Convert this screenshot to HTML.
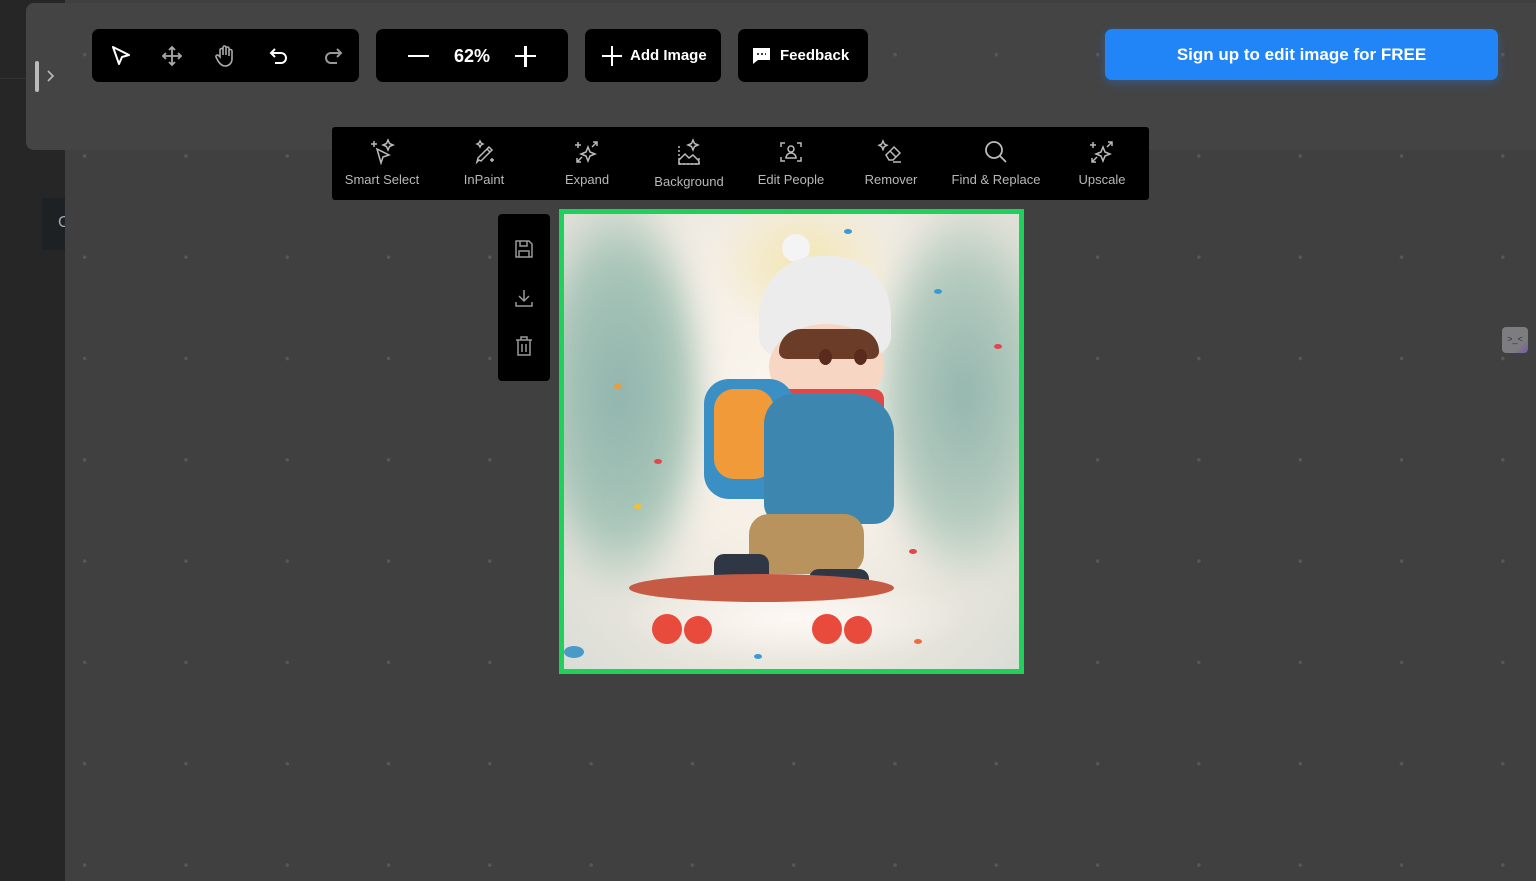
<!DOCTYPE html>
<html><head><meta charset="utf-8"><style>
*{margin:0;padding:0;box-sizing:border-box}
body{width:1536px;height:881px;overflow:hidden;background:#3f3f3f;font-family:"Liberation Sans",sans-serif;position:relative}
.leftbar{position:absolute;left:0;top:0;width:65px;height:881px;background:#262626}
.canvas{position:absolute;left:65px;top:0;right:0;bottom:0;background:#404040;
background-image:radial-gradient(circle,#575757 1.6px,transparent 2px);background-size:101.3px 101.3px;background-position:-31px 4px}
.toppanel{position:absolute;left:26px;top:3px;width:1510px;height:147px;background:#444;border-radius:8px 0 0 8px;
background-image:radial-gradient(circle,#585858 1.6px,transparent 2px);background-size:101.3px 101.3px;background-position:8px 1px}
.bar{position:absolute;background:#000;border-radius:7px;display:flex;align-items:center;color:#fff}
svg{display:block}
.tb{position:absolute;left:332px;top:127px;width:817px;height:73px;background:#000;border-radius:3px}
.tool{position:absolute;top:0;height:73px;text-align:center;color:#b8b8b8;font-size:13px}
.tool svg{margin:11px auto 0}
.tool span{display:block;margin-top:6px;white-space:nowrap}
.side{position:absolute;left:498px;top:214px;width:52px;height:167px;background:#000;border-radius:4px}
.img{position:absolute;left:559px;top:209px;width:465px;height:465px;border:5px solid #1fd05a;overflow:hidden;
background:radial-gradient(ellipse at 50% 40%,#fbf6ee 0%,#f5efe6 40%,#e9e6dd 70%,#d9dcd6 100%)}
.img div{position:absolute}
.c{width:8px;height:5px;border-radius:50%}
</style></head><body>
<div class="leftbar"></div>
<div style="position:absolute;left:0;top:78px;width:26px;height:1px;background:#333"></div>
<div style="position:absolute;left:42px;top:198px;width:23px;height:52px;background:#1e2124"></div>
<div style="position:absolute;left:58px;top:214px;color:#9ab;font-size:16px">C</div>
<div class="canvas"></div>
<div class="toppanel"></div>
<div style="position:absolute;left:35px;top:61px;width:4px;height:31px;background:#bbb;border-radius:2px"></div>
<svg style="position:absolute;left:46px;top:69px" width="10" height="14"><path d="M2 2l5 5-5 5" stroke="#bbb" stroke-width="1.6" fill="none"/></svg>

<div class="bar" style="left:92px;top:29px;width:267px;height:53px"></div>
<svg style="position:absolute;left:110px;top:45px" width="22" height="22" viewBox="0 0 22 22"><path d="M3 2l16 8-7 2-3 7z" stroke="#fff" stroke-width="2" fill="none" stroke-linejoin="round"/></svg>
<svg style="position:absolute;left:161px;top:45px" width="22" height="22" viewBox="0 0 22 22" stroke="#aaa" stroke-width="1.8" fill="none"><path d="M11 2v18M2 11h18M8 5l3-3 3 3M8 17l3 3 3-3M5 8l-3 3 3 3M17 8l3 3-3 3"/></svg>
<svg style="position:absolute;left:214px;top:44px" width="22" height="24" viewBox="0 0 22 24" stroke="#aaa" stroke-width="1.6" fill="none"><path d="M6 13V6a1.5 1.5 0 013 0v5V3.5a1.5 1.5 0 013 0V11V4.5a1.5 1.5 0 013 0V12V7a1.5 1.5 0 013 0v8c0 4-3 7-7 7-3 0-5-2-7-5l-2-4a1.5 1.5 0 012.5-1.5z"/></svg>
<svg style="position:absolute;left:268px;top:45px" width="22" height="22" viewBox="0 0 22 22" stroke="#fff" stroke-width="2" fill="none"><path d="M7 4L3 8l4 4M3 8h10a5 5 0 010 10H7"/></svg>
<svg style="position:absolute;left:322px;top:45px" width="22" height="22" viewBox="0 0 22 22" stroke="#999" stroke-width="2" fill="none"><path d="M15 4l4 4-4 4M19 8H9a5 5 0 000 10h6"/></svg>

<div class="bar" style="left:376px;top:29px;width:192px;height:53px">
<div style="position:absolute;left:32px;top:26px;width:21px;height:2.4px;background:#fff"></div>
<div style="position:absolute;left:78px;top:17px;font-size:18px;font-weight:bold">62%</div>
<div style="position:absolute;left:139px;top:26px;width:21px;height:2.4px;background:#fff"></div>
<div style="position:absolute;left:148.3px;top:16.5px;width:2.4px;height:21px;background:#fff"></div>
</div>

<div class="bar" style="left:585px;top:29px;width:136px;height:53px">
<div style="position:absolute;left:17px;top:26px;width:20px;height:2.4px;background:#fff"></div>
<div style="position:absolute;left:25.8px;top:17px;width:2.4px;height:20px;background:#fff"></div>
<div style="position:absolute;left:45px;top:18px;font-size:15px;font-weight:bold">Add Image</div>
</div>

<div class="bar" style="left:738px;top:29px;width:130px;height:53px">
<svg style="position:absolute;left:14px;top:18px" width="19" height="18" viewBox="0 0 19 18"><path d="M1 1h17v12H6l-5 4z" fill="#fff"/><path d="M5 7h9" stroke="#000" stroke-width="1.5" stroke-dasharray="2 2"/></svg>
<div style="position:absolute;left:42px;top:18px;font-size:15px;font-weight:bold">Feedback</div>
</div>

<div style="position:absolute;left:1105px;top:29px;width:393px;height:51px;background:#2184f7;border-radius:7px;color:#fff;font-size:17px;font-weight:bold;text-align:center;line-height:51px;box-shadow:0 3px 10px rgba(33,132,247,.35)">Sign up to edit image for FREE</div>

<div class="tb">
<div class="tool" style="left:2px;width:96px"><svg width="28" height="28" viewBox="0 0 28 28" stroke="#bbb" stroke-width="1.5" fill="none"><path d="M9 11l4 14 2-6 6-2z"/><path d="M6 3v6M3 6h6M20 2l1.5 3.5L25 7l-3.5 1.5L20 12l-1.5-3.5L15 7l3.5-1.5z"/></svg><span>Smart Select</span></div>
<div class="tool" style="left:104px;width:96px"><svg width="28" height="28" viewBox="0 0 28 28" stroke="#bbb" stroke-width="1.5" fill="none"><path d="M9 22l-2 2 1-4 11-11 3 3-11 11zM17 11l3 3"/><path d="M10 3l1 2 2 1-2 1-1 2-1-2-2-1 2-1zM22 20v4M20 22h4"/></svg><span>InPaint</span></div>
<div class="tool" style="left:207px;width:96px"><svg width="28" height="28" viewBox="0 0 28 28" stroke="#bbb" stroke-width="1.5" fill="none"><path d="M15 9l2 5 5 2-5 2-2 5-2-5-5-2 5-2zM5 4v6M2 7h6M19 9l5-5M20 4h4v4M9 19l-5 5M4 20v4h4"/></svg><span>Expand</span></div>
<div class="tool" style="left:309px;width:96px"><svg width="28" height="30" viewBox="0 0 28 30" stroke="#bbb" stroke-width="1.5" fill="none"><path d="M4 8v12M4 26h20M24 20v6M4 20v6" stroke-dasharray="2 2"/><path d="M4 22l6-6 4 4 4-3 6 6v3H4z"/><path d="M18 2l1.5 3.5L23 7l-3.5 1.5L18 12l-1.5-3.5L13 7l3.5-1.5z"/></svg><span>Background</span></div>
<div class="tool" style="left:411px;width:96px"><svg width="28" height="28" viewBox="0 0 28 28" stroke="#bbb" stroke-width="1.5" fill="none"><path d="M4 9V5h4M20 5h4v4M24 19v4h-4M8 23H4v-4"/><circle cx="14" cy="11" r="3"/><path d="M9 20a5 5 0 0110 0z"/></svg><span>Edit People</span></div>
<div class="tool" style="left:511px;width:96px"><svg width="28" height="28" viewBox="0 0 28 28" stroke="#bbb" stroke-width="1.5" fill="none"><path d="M9 17l8-8 6 6-7 7h-4zM13 13l6 6M16 24h8"/><path d="M6 3l1.3 3L10 7.3 7.3 8.6 6 11.6 4.7 8.6 2 7.3 4.7 6z"/></svg><span>Remover</span></div>
<div class="tool" style="left:614px;width:100px"><svg width="28" height="28" viewBox="0 0 28 28" stroke="#bbb" stroke-width="1.8" fill="none"><circle cx="12" cy="12" r="8"/><path d="M18 18l6 6"/></svg><span>Find &amp; Replace</span></div>
<div class="tool" style="left:722px;width:96px"><svg width="28" height="28" viewBox="0 0 28 28" stroke="#bbb" stroke-width="1.5" fill="none"><path d="M15 9l2 5 5 2-5 2-2 5-2-5-5-2 5-2zM5 4v6M2 7h6M19 9l5-5M20 4h4v4M9 19l-5 5M4 20v4h4"/></svg><span>Upscale</span></div>
</div>

<div class="side">
<svg style="position:absolute;left:15px;top:24px" width="22" height="22" viewBox="0 0 22 22" stroke="#999" stroke-width="1.5" fill="none"><path d="M3 3h13l3 3v13H3zM7 3v5h7V3M6 19v-6h10v6"/></svg>
<svg style="position:absolute;left:15px;top:73px" width="22" height="22" viewBox="0 0 22 22" stroke="#999" stroke-width="1.5" fill="none"><path d="M11 3v11M6 9l5 5 5-5M3 15v4h16v-4"/></svg>
<svg style="position:absolute;left:15px;top:121px" width="22" height="22" viewBox="0 0 22 22" stroke="#999" stroke-width="1.5" fill="none"><path d="M3 5h16M8 5V2h6v3M5 5v15h12V5M9 9v8M13 9v8"/></svg>
</div>

<div class="img">
<div style="left:-40px;top:-30px;width:190px;height:420px;background:radial-gradient(ellipse,#8fb4ad 0%,#a9c5b8 45%,transparent 70%);filter:blur(12px)"></div>
<div style="left:300px;top:-20px;width:200px;height:400px;background:radial-gradient(ellipse,#93b6ae 0%,#b6cbbf 45%,transparent 70%);filter:blur(12px)"></div>
<div style="left:150px;top:-20px;width:180px;height:140px;background:radial-gradient(ellipse,#f2e5b0 0%,transparent 70%);filter:blur(8px)"></div>
<div style="left:60px;top:360px;width:340px;height:90px;background:radial-gradient(ellipse,#fdf8f4,transparent 70%)"></div>
<div style="left:218px;top:20px;width:28px;height:28px;border-radius:50%;background:#f4f4f4"></div>
<div style="left:195px;top:42px;width:132px;height:100px;border-radius:60px 60px 20px 20px;background:#ececec"></div>
<div style="left:205px;top:110px;width:115px;height:85px;border-radius:50%;background:#f7d6c4"></div>
<div style="left:215px;top:115px;width:100px;height:30px;border-radius:30px 30px 10px 10px;background:#6b3d28"></div>
<div style="left:255px;top:135px;width:13px;height:16px;border-radius:50%;background:#5a2a1c"></div>
<div style="left:290px;top:135px;width:13px;height:16px;border-radius:50%;background:#5a2a1c"></div>
<div style="left:215px;top:175px;width:105px;height:30px;background:#e2474a;border-radius:10px"></div>
<div style="left:140px;top:165px;width:90px;height:120px;border-radius:25px;background:#3a8fc4"></div>
<div style="left:150px;top:175px;width:60px;height:90px;border-radius:20px;background:#f19a3a"></div>
<div style="left:200px;top:180px;width:130px;height:130px;border-radius:30px 40px 20px 20px;background:#3c86b0"></div>
<div style="left:185px;top:300px;width:115px;height:60px;border-radius:20px;background:#b9935e"></div>
<div style="left:150px;top:340px;width:55px;height:30px;border-radius:10px;background:#2f3644"></div>
<div style="left:245px;top:355px;width:60px;height:25px;border-radius:10px;background:#2f3644"></div>
<div style="left:65px;top:360px;width:265px;height:28px;border-radius:50%;background:#c65b45"></div>
<div style="left:88px;top:400px;width:30px;height:30px;border-radius:50%;background:#e84b3c"></div>
<div style="left:120px;top:402px;width:28px;height:28px;border-radius:50%;background:#e84b3c"></div>
<div style="left:248px;top:400px;width:30px;height:30px;border-radius:50%;background:#e84b3c"></div>
<div style="left:280px;top:402px;width:28px;height:28px;border-radius:50%;background:#e84b3c"></div>
<div class="c" style="left:280px;top:15px;background:#3a9ad8"></div>
<div class="c" style="left:370px;top:75px;background:#3a9ad8"></div>
<div class="c" style="left:50px;top:170px;background:#f19a3a"></div>
<div class="c" style="left:90px;top:245px;background:#e2474a"></div>
<div class="c" style="left:430px;top:130px;background:#e2474a"></div>
<div class="c" style="left:345px;top:335px;background:#e2474a"></div>
<div class="c" style="left:70px;top:290px;background:#f2c030"></div>
<div class="c" style="left:190px;top:440px;background:#3a9ad8"></div>
<div class="c" style="left:350px;top:425px;background:#e87040"></div>
<div style="left:0;top:432px;width:20px;height:12px;border-radius:50%;background:#4a9ac8"></div>
</div>

<div style="position:absolute;left:1502px;top:327px;width:26px;height:26px;border-radius:4px;background:linear-gradient(135deg,#7d7d80 70%,#7a5aa8);color:#333;font-size:9px;text-align:center;line-height:24px">&gt;_&lt;</div>
</body></html>
